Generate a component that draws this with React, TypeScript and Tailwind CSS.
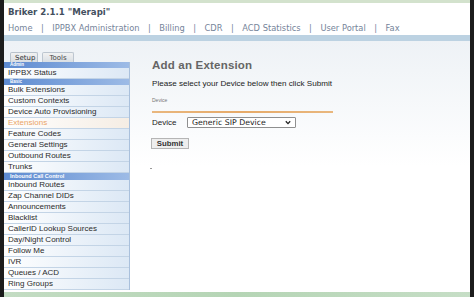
import React, { useState } from "react";

/* ---------- Data ---------- */
type NavItem = { label: string; header?: boolean; active?: boolean };

const topLinks = [
  "Home",
  "IPPBX Administration",
  "Billing",
  "CDR",
  "ACD Statistics",
  "User Portal",
  "Fax",
];

const menu: NavItem[] = [
  { label: "Admin", header: true },
  { label: "IPPBX Status" },
  { label: "Basic", header: true },
  { label: "Bulk Extensions" },
  { label: "Custom Contexts" },
  { label: "Device Auto Provisioning" },
  { label: "Extensions", active: true },
  { label: "Feature Codes" },
  { label: "General Settings" },
  { label: "Outbound Routes" },
  { label: "Trunks" },
  { label: "Inbound Call Control", header: true },
  { label: "Inbound Routes" },
  { label: "Zap Channel DIDs" },
  { label: "Announcements" },
  { label: "Blacklist" },
  { label: "CallerID Lookup Sources" },
  { label: "Day/Night Control" },
  { label: "Follow Me" },
  { label: "IVR" },
  { label: "Queues / ACD" },
  { label: "Ring Groups" },
];

/* ---------- Header ---------- */
const Header = () => (
  <div className="flex flex-col">
    <div className="h-[3px] bg-[#d3e2cd]" />
    <div className="h-[18px] flex items-center pl-[4px] pt-[1px] font-['DejaVu_Sans',sans-serif] text-[8.6px] font-bold text-[#434f5e]">
      Briker 2.1.1 &quot;Merapi&quot;
    </div>
    <div className="h-[14px] flex items-center pl-[4px] pt-[1px] font-['DejaVu_Sans',sans-serif] text-[8.3px] text-[#75849a]">
      {topLinks.map((link, i) => (
        <span key={link} className="flex items-center">
          {i > 0 && <span className="mx-[8.5px]">|</span>}
          <span>{link}</span>
        </span>
      ))}
    </div>
    <div className="h-[6px] bg-[#bcd2e2]" />
  </div>
);

/* ---------- Sidebar ---------- */
const Sidebar = () => {
  const [tab, setTab] = useState("Setup");
  return (
    <div className="w-[126px] flex flex-col bg-gradient-to-b from-[#eef2f6] to-white">
      <div className="h-[11px]" />
      <div className="h-[10px] flex items-end gap-[4px] pl-[6px] font-['DejaVu_Sans',sans-serif] text-[7px] text-[#333]">
        {["Setup", "Tools"].map((t) => (
          <button
            key={t}
            onClick={() => setTab(t)}
            className={`h-[10px] px-[4px] leading-[10px] border border-b-0 border-[#b8c2cc] rounded-t-[2px] bg-gradient-to-b from-[#f2f2f2] to-[#d8dde2] ${
              t === "Tools" ? "w-[32px]" : "w-[28px]"
            } ${tab === t ? "" : "opacity-90"}`}
          >
            {t}
          </button>
        ))}
      </div>
      <div className="flex flex-col border-r border-[#a9c0dc] font-['Liberation_Sans',Arial,sans-serif]">
        {menu.map((item) =>
          item.header ? (
            <div
              key={item.label}
              className={`${
                item.label === "Inbound Call Control" ? "h-[7px] text-[5.5px]" : "h-[6px] text-[4.5px]"
              } flex items-center pl-[6px] bg-gradient-to-r from-[#5d8ad0] to-[#9dbbe6] text-white font-bold leading-none`}
            >
              {item.label}
            </div>
          ) : (
            <div
              key={item.label}
              className={`h-[11px] flex items-center pl-[4px] border-b border-[#c3d4e6] text-[8px] leading-none ${
                item.active
                  ? "bg-gradient-to-r from-white to-[#f5ede4] text-[#eaa466]"
                  : "bg-gradient-to-r from-white to-[#dce8f5] text-[#2b2b2b]"
              }`}
            >
              {item.label}
            </div>
          )
        )}
      </div>
    </div>
  );
};

/* ---------- Content ---------- */
const Content = () => {
  const [device, setDevice] = useState("generic");
  return (
    <div className="flex-1 flex flex-col bg-gradient-to-b from-[#eef2f6] via-white to-white pl-[22px] pt-[17px] font-['Liberation_Sans',Arial,sans-serif]">
      <div className="h-[16px] flex items-center text-[11.5px] font-bold text-[#656565] tracking-[0.2px]">
        Add an Extension
      </div>
      <div className="mt-[5px] h-[10px] flex items-center text-[8.1px] text-[#222]">
        Please select your Device below then click Submit
      </div>
      <div className="mt-[8px] h-[8px] flex items-center text-[5px] text-[#777]">
        Device
      </div>
      <div className="mt-[6px] h-[2px] w-[181px] bg-gradient-to-r from-[#e9b77e] via-[#e6aa68] to-[#e9b77e]" />
      <div className="mt-[4px] flex items-center h-[11px] text-[8px] text-[#222]">
        <span className="w-[35px]">Device</span>
        <div className="relative w-[109px] h-[11px] border border-[#8f8f8f] rounded-[1px] bg-white">
          <select
            value={device}
            onChange={(e) => setDevice(e.target.value)}
            className="appearance-none block w-full h-[9px] py-0 bg-transparent pl-[4px] font-['DejaVu_Sans',sans-serif] text-[7.8px] leading-[9px] text-[#222] outline-none"
          >
            <option value="generic">Generic SIP Device</option>
            <option value="iax">Generic IAX2 Device</option>
            <option value="zap">Generic ZAP Device</option>
          </select>
          <svg
            className="absolute right-[4px] top-[2px] pointer-events-none"
            width="6"
            height="5"
            viewBox="0 0 6 5"
          >
            <path d="M0.8 1.2 L3 3.6 L5.2 1.2" fill="none" stroke="#222" strokeWidth="1.3" />
          </svg>
        </div>
      </div>
      <button className="mt-[10px] w-[38px] h-[11px] -ml-[1px] border border-[#b5b5b5] bg-[#eeeeee] text-[7.8px] font-bold text-[#333] leading-none">
        Submit
      </button>
      <div className="mt-[19px] -ml-[2px] w-[2px] h-[1px] bg-[#999]" />
    </div>
  );
};

/* ---------- App ---------- */
export default function App() {
  return (
    <div className="w-[474px] h-[297px] flex bg-[#1c1c1c] overflow-hidden">
      <div className="w-[4px]" />
      <div className="w-[466px] flex flex-col bg-white">
        <Header />
        <div className="flex-1 flex min-h-0">
          <Sidebar />
          <Content />
        </div>
        <div className="h-[5px] bg-gradient-to-r from-[#c3dcc3] via-[#b5d5b5] to-[#c6dec6]" />
      </div>
      <div className="w-[4px]" />
    </div>
  );
}
